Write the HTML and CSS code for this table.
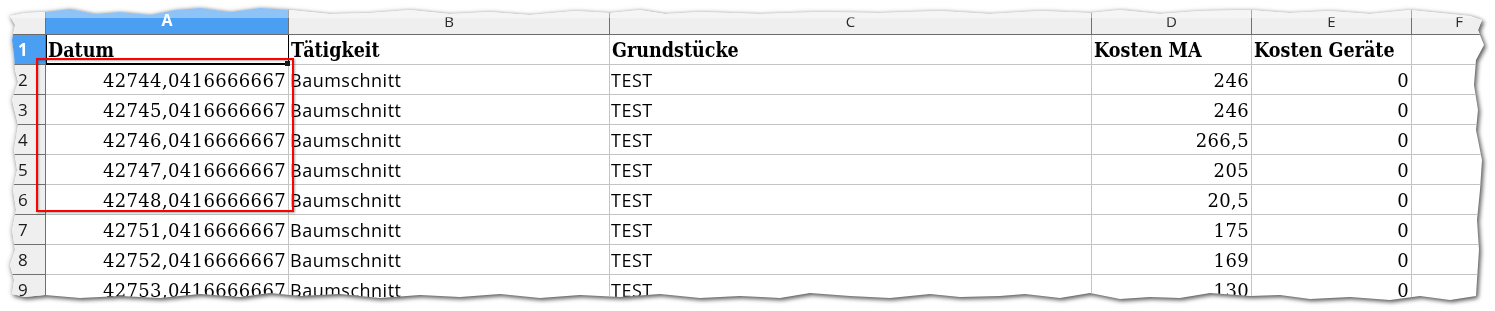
FILE: index.html
```html
<!DOCTYPE html>
<html lang="de">
<head>
<meta charset="utf-8">
<title>Tabelle1</title>
<link rel="stylesheet" href="styles.css">
</head>
<body>
<div class="paper">
  <div class="sheet">
    <!-- column headers -->
    <div class="corner"></div>
    <div class="colhead sel">A</div>
    <div class="colhead">B</div>
    <div class="colhead">C</div>
    <div class="colhead">D</div>
    <div class="colhead">E</div>
    <div class="colhead">F</div>

    <!-- row 1: field names -->
    <div class="rowhead sel">1</div>
    <div class="cell head active">Datum</div>
    <div class="cell head">Tätigkeit</div>
    <div class="cell head">Grundstücke</div>
    <div class="cell head">Kosten MA</div>
    <div class="cell head">Kosten Geräte</div>
    <div class="cell"></div>

    <div class="rowhead">2</div>
    <div class="cell num">42744,0416666667</div>
    <div class="cell txt">Baumschnitt</div>
    <div class="cell txt">TEST</div>
    <div class="cell num">246</div>
    <div class="cell num">0</div>
    <div class="cell"></div>

    <div class="rowhead">3</div>
    <div class="cell num">42745,0416666667</div>
    <div class="cell txt">Baumschnitt</div>
    <div class="cell txt">TEST</div>
    <div class="cell num">246</div>
    <div class="cell num">0</div>
    <div class="cell"></div>

    <div class="rowhead">4</div>
    <div class="cell num">42746,0416666667</div>
    <div class="cell txt">Baumschnitt</div>
    <div class="cell txt">TEST</div>
    <div class="cell num">266,5</div>
    <div class="cell num">0</div>
    <div class="cell"></div>

    <div class="rowhead">5</div>
    <div class="cell num">42747,0416666667</div>
    <div class="cell txt">Baumschnitt</div>
    <div class="cell txt">TEST</div>
    <div class="cell num">205</div>
    <div class="cell num">0</div>
    <div class="cell"></div>

    <div class="rowhead">6</div>
    <div class="cell num">42748,0416666667</div>
    <div class="cell txt">Baumschnitt</div>
    <div class="cell txt">TEST</div>
    <div class="cell num">20,5</div>
    <div class="cell num">0</div>
    <div class="cell"></div>

    <div class="rowhead">7</div>
    <div class="cell num">42751,0416666667</div>
    <div class="cell txt">Baumschnitt</div>
    <div class="cell txt">TEST</div>
    <div class="cell num">175</div>
    <div class="cell num">0</div>
    <div class="cell"></div>

    <div class="rowhead">8</div>
    <div class="cell num">42752,0416666667</div>
    <div class="cell txt">Baumschnitt</div>
    <div class="cell txt">TEST</div>
    <div class="cell num">169</div>
    <div class="cell num">0</div>
    <div class="cell"></div>

    <div class="rowhead">9</div>
    <div class="cell num">42753,0416666667</div>
    <div class="cell txt">Baumschnitt</div>
    <div class="cell txt">TEST</div>
    <div class="cell num">130</div>
    <div class="cell num">0</div>
    <div class="cell"></div>

    <!-- overlays -->
    <div class="fade"></div>
    <div class="handle"></div>
    <div class="mark"></div>
  </div>
</div>
</body>
</html>
```

FILE: styles.css
```css
html, body {
  margin: 0;
  padding: 0;
  background: #fff;
  overflow: hidden;
}

.paper {
  width: 1495px;
  height: 311px;
  filter: drop-shadow(2px 2px 2px rgba(0, 0, 0, 0.6)) drop-shadow(-1px 0 2px rgba(0, 0, 0, 0.2));
}

/* the sheet, with its torn edges */
.sheet {
  position: relative;
  width: 1507px;
  height: 311px;
  display: grid;
  grid-template-columns: 46px 243px 321px 482px 160px 160px 95px;
  grid-template-rows: 35px;
  grid-auto-rows: 30px;
  background: #fff;
  clip-path: polygon(
    10px 16px, 25px 13px, 45px 12px, 70px 9px, 95px 14px, 120px 12px, 150px 15px, 175px 10px,
    200px 8px, 230px 12px, 260px 8px, 290px 10px, 330px 14px, 370px 13px, 410px 10px, 450px 14px,
    490px 12px, 530px 15px, 575px 11px, 610px 13px, 640px 10px, 665px 14px, 700px 12px, 760px 14px,
    820px 12px, 880px 13px, 940px 11px, 990px 14px, 1040px 11px, 1090px 13px, 1120px 10px,
    1160px 14px, 1200px 11px, 1250px 10px, 1290px 13px, 1330px 11px, 1370px 14px, 1410px 10px,
    1440px 13px, 1470px 16px, 1482px 20px,
    1478px 30px, 1484px 45px, 1476px 60px, 1474px 85px, 1478px 110px, 1476px 130px, 1482px 160px,
    1480px 190px, 1477px 220px, 1479px 250px, 1477px 280px, 1476px 296px,
    1450px 300px, 1420px 296px, 1390px 300px, 1350px 297px, 1310px 299px, 1280px 295px,
    1250px 296px, 1210px 293px, 1180px 298px, 1150px 297px, 1120px 299px, 1090px 293px,
    1060px 298px, 1025px 294px, 1000px 296px, 960px 297px, 930px 294px, 890px 298px, 850px 296px,
    810px 293px, 780px 298px, 740px 296px, 700px 298px, 660px 294px, 620px 297px, 580px 295px,
    540px 298px, 500px 294px, 460px 297px, 420px 295px, 380px 298px, 340px 294px, 300px 296px,
    270px 293px, 240px 297px, 200px 294px, 160px 298px, 120px 296px, 80px 298px, 45px 295px,
    25px 297px, 12px 294px,
    14px 280px, 10px 265px, 15px 250px, 12px 230px, 16px 210px, 13px 190px, 17px 170px,
    14px 150px, 18px 125px, 12px 100px, 18px 82px, 15px 70px, 14px 55px, 12px 40px, 15px 25px
  );
}

.sheet > div {
  box-sizing: border-box;
  min-width: 0;
  overflow: hidden;
  white-space: nowrap;
}

/* headers */
.corner,
.colhead {
  background: #efefef;
  border-right: 1px solid #707070;
  border-bottom: 1px solid #6b6b6b;
}

.colhead {
  font-family: "Open Sans", "Noto Sans", sans-serif;
  font-size: 15px;
  line-height: 17px;
  padding-top: 13px;
  text-align: center;
  color: #2a2a2a;
}

.colhead.sel {
  background: #4a9ff2;
  color: #fff;
  font-weight: 700;
  font-size: 16px;
  padding-top: 12px;
}

.rowhead {
  background: #efefef;
  border-right: 1px solid #707070;
  border-bottom: 1px solid #707070;
  font-family: "Open Sans", "Noto Sans", sans-serif;
  font-size: 17px;
  line-height: 27px;
  padding: 1px 0 0 18px;
  color: #1a1a1a;
}

.rowhead.sel {
  background: #4a9ff2;
  color: #fff;
  font-weight: 700;
}

/* cells */
.cell {
  border-right: 1px solid #c4c4c4;
  border-bottom: 1px solid #c4c4c4;
  padding: 2px 2px 0;
  line-height: 27px;
  color: #000;
}

.head {
  font-family: "DejaVu Serif Condensed", "DejaVu Serif", "Liberation Serif", serif;
  font-stretch: condensed;
  font-weight: 700;
  font-size: 19.5px;
}

.num {
  font-family: "DejaVu Serif", "Liberation Serif", serif;
  font-size: 18px;
  letter-spacing: 0.35px;
  text-align: right;
  padding-right: 2px;
}

.txt {
  font-family: "Open Sans", "Noto Sans", sans-serif;
  font-size: 18px;
  letter-spacing: 0.5px;
  padding-left: 1px;
}

.active {
  border-right-color: #000;
  border-bottom-color: #000;
  box-shadow: inset 1px 0 0 #000, inset 0 -1px 0 #000;
}

/* fill handle of the active cell */
.handle {
  position: absolute;
  left: 285px;
  top: 61px;
  width: 5px;
  height: 5px;
  background: #1a1a1a;
}

/* highlight frame around the dates */
.mark {
  position: absolute;
  left: 36px;
  top: 58px;
  width: 258px;
  height: 154px;
  border: 2px solid #f00;
  box-shadow: 1px 1px 2px rgba(0, 0, 0, 0.35), inset 1px 1px 2px rgba(0, 0, 0, 0.3);
}

/* paper fade along the torn top edge */
.fade {
  position: absolute;
  left: 0;
  top: 0;
  right: 0;
  height: 18px;
  background: rgba(255, 255, 255, 0.38);
}
```
